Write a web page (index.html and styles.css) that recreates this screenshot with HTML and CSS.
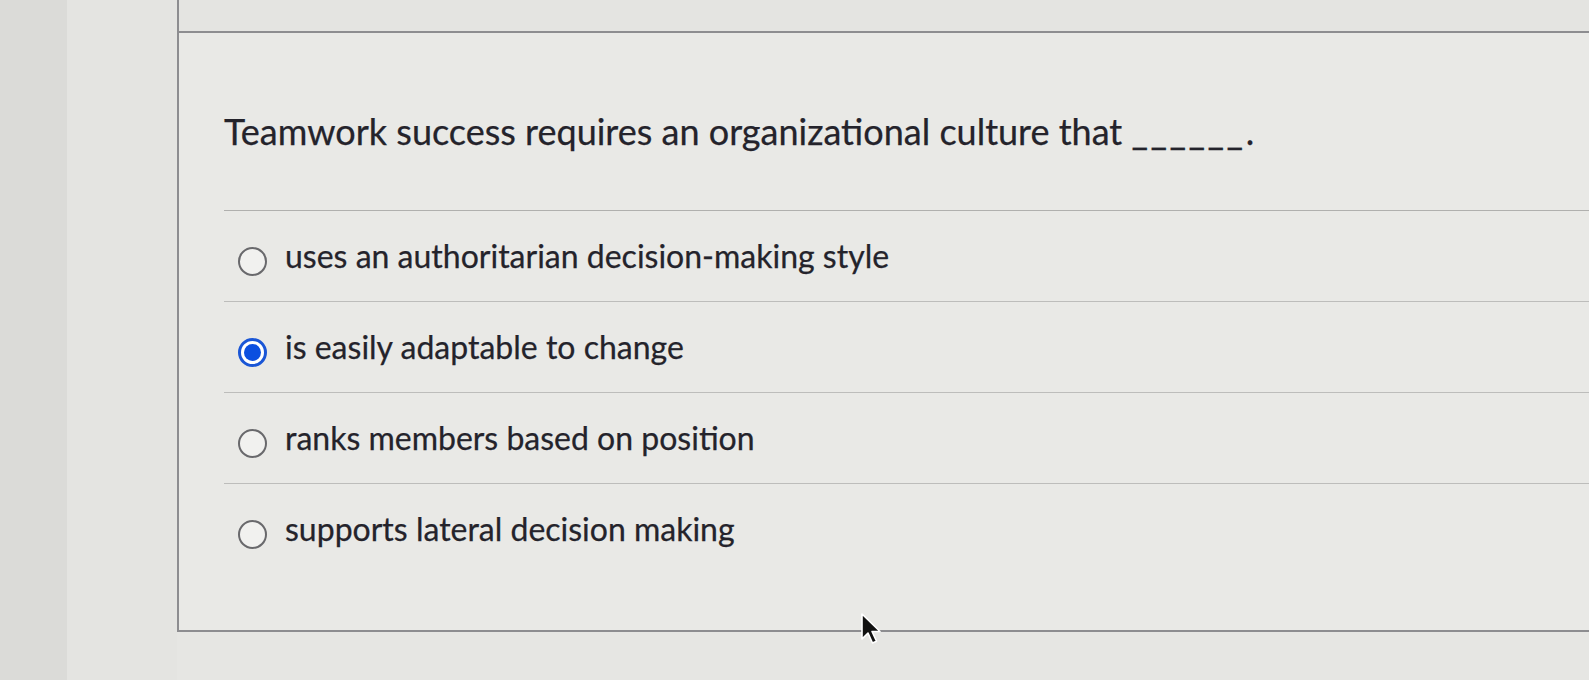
FILE: index.html
```html
<!DOCTYPE html>
<html lang="en">
<head>
<meta charset="utf-8">
<title>Question</title>
<link rel="stylesheet" href="styles.css">
</head>
<body>
<div class="page">
  <div class="gutter"></div>
  <div class="side"></div>
  <div class="column">
    <div class="main">
      <div class="header"></div>
      <div class="body">
        <div class="question">Teamwork success requires an organizational culture that <span class="blank">______</span>.</div>
        <div class="option">
          <span class="radio"></span>
          <span class="label">uses an authoritarian decision-making style</span>
        </div>
        <div class="option">
          <span class="radio checked"></span>
          <span class="label">is easily adaptable to change</span>
        </div>
        <div class="option">
          <span class="radio"></span>
          <span class="label">ranks members based on position</span>
        </div>
        <div class="option last">
          <span class="radio"></span>
          <span class="label">supports lateral decision making</span>
        </div>
      </div>
    </div>
  </div>
</div>
<svg class="cursor" width="26" height="36" viewBox="0 0 26 36">
  <path d="M2 2 L2 27 L8 21 L12.5 31 L16.5 29.2 L12 19.5 L20 19.5 Z" fill="#111" stroke="#fff" stroke-width="1.6" stroke-linejoin="round"/>
</svg>
</body>
</html>
```

FILE: styles.css
```css
html, body {
  margin: 0;
  padding: 0;
  height: 100%;
}
body {
  background: #dcdcd9;
  font-family: Lato, "Open Sans", "Liberation Sans", sans-serif;
  color: #24232b;
  overflow: hidden;
  position: relative;
}
.page {
  display: flex;
  height: 680px;
}
.gutter {
  width: 67px;
  background: #dbdbd8;
}
.side {
  width: 110px;
  background: #e4e4e1;
}
.column {
  flex: 1;
  background: #e6e6e3;
}
.main {
  height: 632px;
  box-sizing: border-box;
  border-left: 2px solid #8d8d90;
  border-bottom: 2px solid #8d8d90;
  background: #e9e9e6;
  display: flex;
  flex-direction: column;
}
.header {
  height: 31px;
  border-bottom: 2px solid #8d8d90;
  background: #e4e4e1;
  flex: none;
}
.body {
  padding-left: 45px;
}
.question {
  font-size: 36px;
  line-height: 44px;
  padding-top: 76px;
  padding-bottom: 57px;
  border-bottom: 1.5px solid #b0b0ae;
  white-space: nowrap;
  -webkit-text-stroke: 0.25px #24232b;
}
.blank {
  letter-spacing: 2.5px;
}
.option {
  display: flex;
  align-items: center;
  height: 90px;
  padding-left: 14px;
  border-bottom: 1.5px solid #bdbdbb;
}
.option.last {
  border-bottom: none;
}
.radio {
  width: 29px;
  height: 29px;
  box-sizing: border-box;
  border: 2px solid #69696c;
  border-radius: 50%;
  background: #f1f1ef;
  flex: none;
  margin-right: 18px;
  margin-top: 10px;
  position: relative;
}
.radio.checked {
  border: 3px solid #1a56d6;
  background: #fff;
}
.radio.checked::after {
  content: "";
  position: absolute;
  left: 3px;
  top: 3px;
  width: 17px;
  height: 17px;
  border-radius: 50%;
  background: #0b4fe0;
}
.label {
  font-size: 32px;
  line-height: 40px;
  white-space: nowrap;
  -webkit-text-stroke: 0.25px #24232b;
}
.cursor {
  position: absolute;
  left: 860px;
  top: 612px;
}
```
